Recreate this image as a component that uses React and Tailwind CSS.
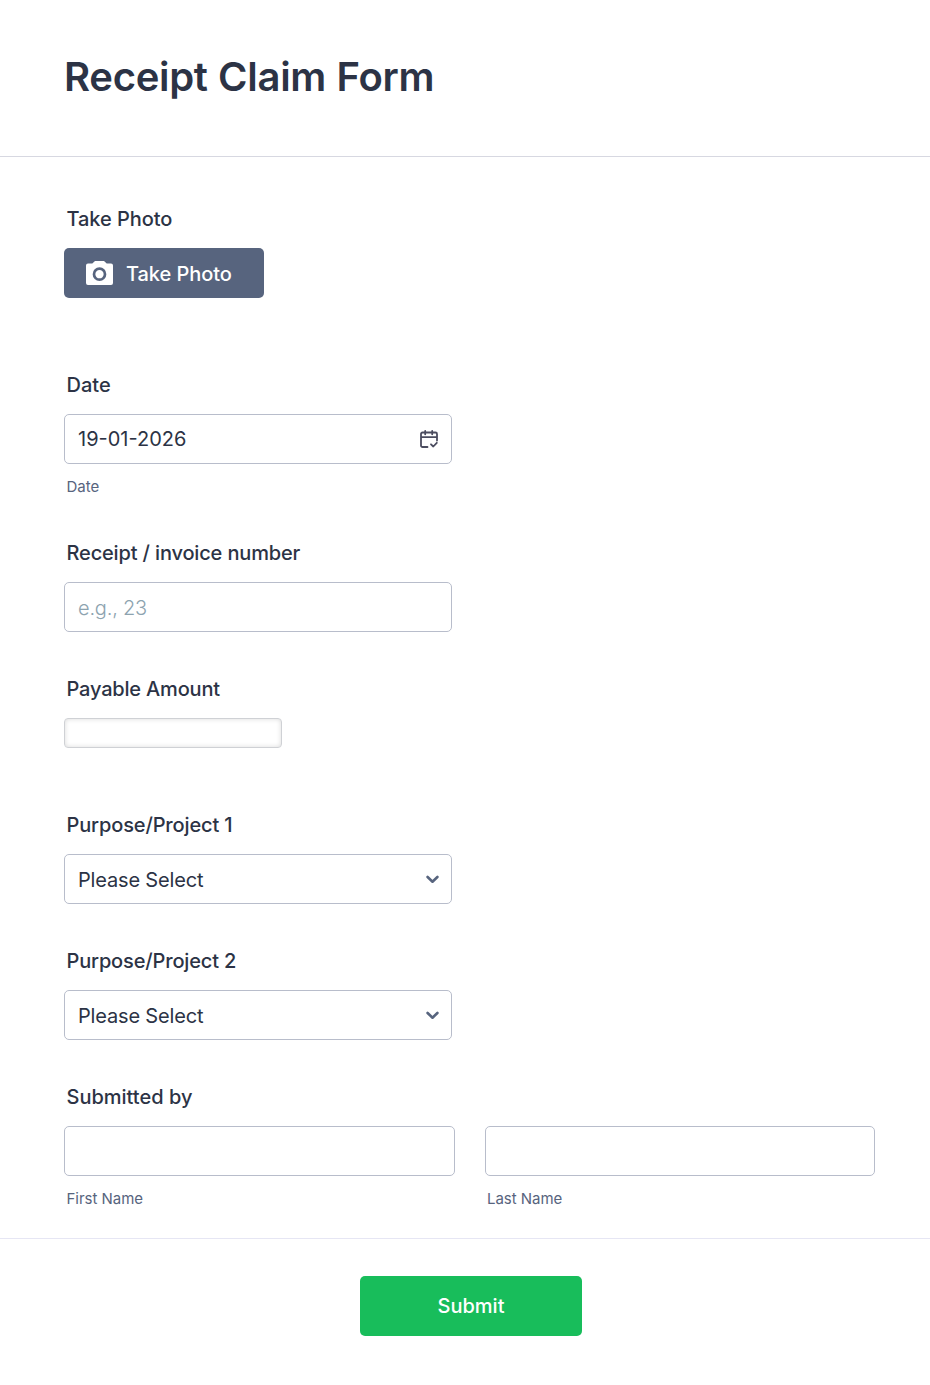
import { useState } from "react";

const inputClass =
  "block h-[50px] w-full rounded-[5px] border border-[#b8bdcb] bg-white px-[13px] text-[20px] text-[#2c3345] outline-none placeholder:font-light placeholder:text-[#8da3af] focus:border-[#2e69ff]";

function Field({ label, labelClass = "", className = "", children }) {
  return (
    <div className={className}>
      <label className={`block h-6 pl-[2.5px] text-[20px] leading-6 font-medium text-[#2c3345] ${labelClass}`}>{label}</label>
      <div className="mt-[17px]">{children}</div>
    </div>
  );
}

function SubLabel({ children }) {
  return <span className="mt-[13px] block h-5 pl-[2.5px] text-[15px] leading-5 tracking-[-0.03px] text-[#57647e]">{children}</span>;
}

function Select({ value, onChange }) {
  return (
    <div className="relative">
      <select value={value} onChange={(e) => onChange(e.target.value)} className={`${inputClass} appearance-none pt-[2px] tracking-[-0.17px]`}>
        <option value="">Please Select</option>
        <option value="travel">Travel</option>
        <option value="office">Office</option>
      </select>
      <svg className="pointer-events-none absolute top-[21px] right-[13px] h-[10px] w-[13px]" viewBox="0 0 13 10" fill="none" stroke="#57647e" strokeWidth="2.600">
        <path strokeLinecap="round" strokeLinejoin="round" d="M1.600 2l4.900 4.700L11.400 2" />
      </svg>
    </div>
  );
}

export default function App() {
  const [date, setDate] = useState("19-01-2026");
  const [purpose1, setPurpose1] = useState("");
  const [purpose2, setPurpose2] = useState("");

  return (
    <form
      className="min-h-[1385px] bg-white font-['Inter',sans-serif] text-[#2c3345]"
      onSubmit={(e) => e.preventDefault()}
    >
      {/* Header */}
      <header className="h-[157px] border-b border-[#d7d8e1] px-16 pt-[52px]">
        <h1 className="text-[40px] leading-[50px] font-semibold tracking-[-0.3px] [word-spacing:0.7px]">Receipt Claim Form</h1>
      </header>

      {/* Fields */}
      <main className="px-16 pt-[50px] pb-[29px]">
        <Field label="Take Photo" labelClass="tracking-[-0.05px]">
          <button type="button" className="flex h-[50px] w-[200px] items-center rounded-[5px] bg-[#57647e] pl-[22px] text-[20px] font-medium text-white">
            <svg className="h-6 w-[27px]" viewBox="0 0 27 24">
              <path fill="#fff" d="M9 0h9l2.700 2.600H25a2 2 0 0 1 2 2V22a2 2 0 0 1-2 2H2a2 2 0 0 1-2-2V4.600a2 2 0 0 1 2-2h4.300z" />
              <circle cx="13.500" cy="13.200" r="5.500" fill="none" stroke="#57647e" strokeWidth="2.700" />
            </svg>
            <span className="ml-[13px] pt-[2px] tracking-[-0.07px]">Take Photo</span>
          </button>
        </Field>

        <Field label="Date" className="mt-[75px] w-[388px]">
          <div className="relative">
            <input className={inputClass} value={date} onChange={(e) => setDate(e.target.value)} />
            <svg className="absolute top-[16px] right-[14.500px] h-[18px] w-[18px]" viewBox="0 0 18 18" fill="none" stroke="#4b4c5f" strokeWidth="1.800">
              <path strokeLinecap="round" strokeLinejoin="round" d="M7.500 17H2.500A1.500 1.500 0 0 1 1 15.500V4a1.500 1.500 0 0 1 1.500-1.500h13A1.500 1.500 0 0 1 17 4v6.500M1 7.200h16M5.200.9v3.400M12.200.9v3.400M11 14.300l2.300 2.200 3.500-3.700" />
            </svg>
          </div>
          <SubLabel>Date</SubLabel>
        </Field>

        <Field label="Receipt / invoice number" labelClass="tracking-[-0.15px]" className="mt-11 w-[388px]">
          <input className={`${inputClass} pt-[2px] tracking-[-0.2px]`} placeholder="e.g., 23" />
        </Field>

        <Field label="Payable Amount" labelClass="tracking-[-0.18px]" className="mt-[45px]">
          <input className="block h-[30px] w-[218px] rounded-[4px] border border-[#cfd1d5] px-2 shadow-[inset_0_0_5px_rgba(0,0,0,0.15)] outline-none" />
        </Field>

        <Field label="Purpose/Project 1" labelClass="tracking-[-0.13px]" className="mt-[65px] w-[388px]">
          <Select value={purpose1} onChange={setPurpose1} />
        </Field>

        <Field label="Purpose/Project 2" labelClass="tracking-[-0.15px]" className="mt-[45px] w-[388px]">
          <Select value={purpose2} onChange={setPurpose2} />
        </Field>

        <Field label="Submitted by" className="mt-[45px] w-[811px]">
          <div className="grid grid-cols-2 gap-[30px]">
            <div>
              <input className={inputClass} />
              <SubLabel>First Name</SubLabel>
            </div>
            <div>
              <input className={inputClass} />
              <SubLabel>Last Name</SubLabel>
            </div>
          </div>
        </Field>
      </main>

      {/* Submit */}
      <footer className="flex justify-center border-t border-[#e6e6f4] pt-[37px] pl-3">
        <button type="submit" className="h-[60px] w-[222px] rounded-[5px] bg-[#18bd5b] text-[20px] font-medium text-white">
          Submit
        </button>
      </footer>
    </form>
  );
}
